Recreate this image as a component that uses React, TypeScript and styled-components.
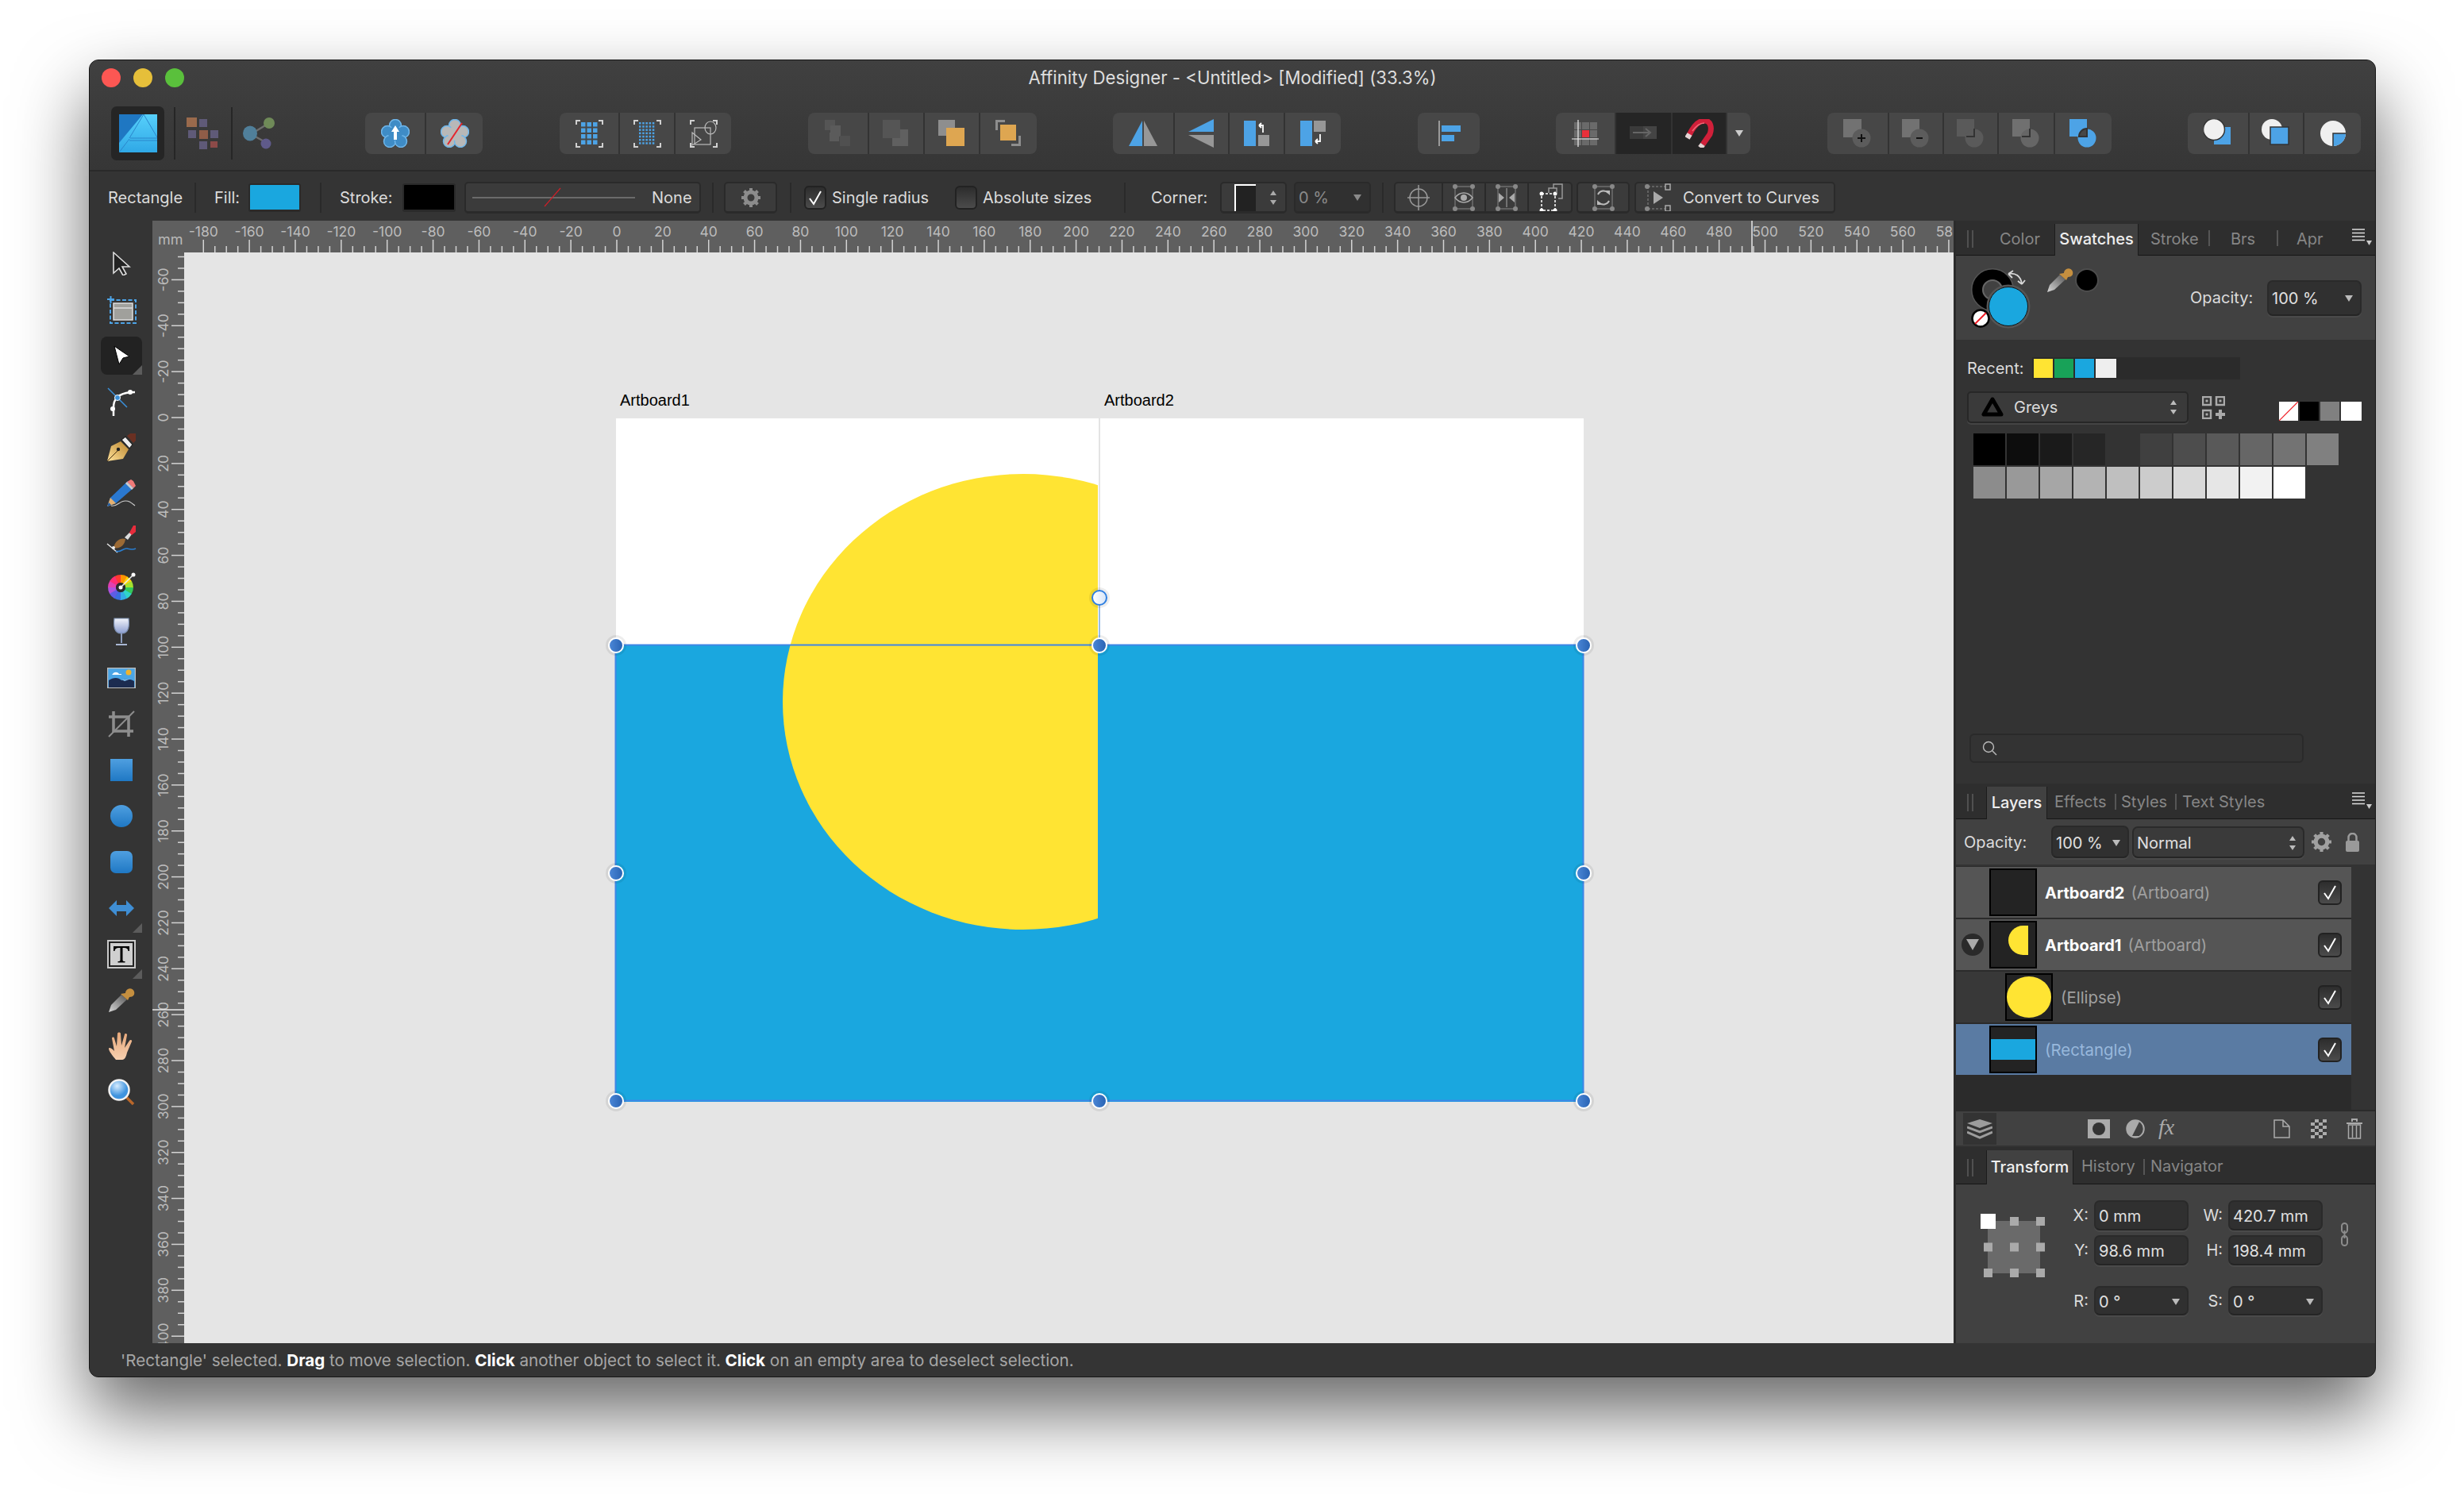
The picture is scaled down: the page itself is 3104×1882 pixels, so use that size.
import React from "react";
import styled, { createGlobalStyle } from "styled-components";

const GlobalStyle = createGlobalStyle`
  html, body {
    margin: 0;
    padding: 0;
    background: #fff;
    font-family: Inter, "Liberation Sans", sans-serif;
  }
  * { box-sizing: border-box; }
`;

const BLUE = "#1aa7df";
const YELLOW = "#ffe433";
const ICON_BLUE = "#4da3e6";

/* ---------- small drawings ---------- */

const Flower = ({ fill }: { fill: string }) => (
  <g fill={fill} stroke="#6fb6ea" strokeWidth="1.5">
    <circle cx="18" cy="8" r="7.5" />
    <circle cx="8" cy="16" r="7.5" />
    <circle cx="28" cy="16" r="7.5" />
    <circle cx="11" cy="28" r="7.5" />
    <circle cx="25" cy="28" r="7.5" />
    <circle cx="18" cy="18" r="9" stroke="none" />
  </g>
);

const DotGrid = ({ cols, rows, size, step, x, y }: { cols: number; rows: number; size: number; step: number; x: number; y: number }) => (
  <g fill={ICON_BLUE}>
    {Array.from({ length: cols * rows }).map((_, i) => (
      <rect key={i} x={x + (i % cols) * step} y={y + Math.floor(i / cols) * step} width={size} height={size} />
    ))}
  </g>
);

const Brackets = () => (
  <g stroke="#d0d0d0" strokeWidth="2" fill="none">
    <path d="M1 6V1H6M29 1h5v5M34 29v5h-5M6 34H1v-5" />
  </g>
);

const CtxHandles = ({ children }: { children?: React.ReactNode }) => (
  <svg width="32" height="36" viewBox="0 0 32 36">
    <rect x="5" y="4" width="22" height="28" fill="none" stroke="#888" strokeWidth="1" />
    <g fill="#888">
      <circle cx="5" cy="4" r="3" />
      <circle cx="27" cy="4" r="3" />
      <circle cx="5" cy="32" r="3" />
      <circle cx="27" cy="32" r="3" />
    </g>
    {children}
  </svg>
);

const Check = () => (
  <svg width="20" height="22" viewBox="0 0 20 22">
    <path d="M3 12l5 7L17 3" fill="none" stroke="#fff" strokeWidth="2" />
  </svg>
);

const Gear = ({ size = 24, color = "#8c8c8c" }: { size?: number; color?: string }) => (
  <svg width={size} height={size} viewBox="0 0 24 24">
    <circle cx="12" cy="12" r="7" fill="none" stroke={color} strokeWidth="5" />
    <g stroke={color} strokeWidth="4">
      <path d="M12 0v5M12 19v5M0 12h5M19 12h5M3.5 3.5l3.5 3.5M17 17l3.5 3.5M20.5 3.5L17 7M7 17l-3.5 3.5" />
    </g>
  </svg>
);

const MenuIcon = () => (
  <svg width="26" height="24" viewBox="0 0 26 24">
    <path d="M1 2h16M1 6.5h16M1 11h16M1 15.500h16" stroke="#ddd" strokeWidth="1.6" />
    <path d="M19 16h7l-3.500 6z" fill="#ccc" />
  </svg>
);

const UpDown = ({ color = "#aaa" }: { color?: string }) => (
  <svg width="10" height="24" viewBox="0 0 10 24">
    <path d="M5 3l4 6H1zM5 21l4-6H1z" fill={color} />
  </svg>
);

const DownTri = ({ color = "#bbb" }: { color?: string }) => (
  <svg width="12" height="10" viewBox="0 0 12 10">
    <path d="M1 1h10L6 9z" fill={color} />
  </svg>
);

const Dropper = ({ w = 34, h = 32 }: { w?: number; h?: number }) => (
  <svg width={w} height={h} viewBox="0 0 34 32">
    <defs>
      <linearGradient id="dropBody" x1="0" y1="1" x2="1" y2="0">
        <stop offset="0" stopColor="#d8d8d8" />
        <stop offset="1" stopColor="#555" />
      </linearGradient>
    </defs>
    <path d="M1 31l3-9L17 9l7 6L10 28z" fill="url(#dropBody)" />
    <path d="M16 8l9 8 2-4c5 0 7-3 6-7-1-3-5-5-8-3-2 1-3 3-3 5z" fill="#c58f3f" />
  </svg>
);

/* left tool column */
const wheelColors = ["#ff3b30", "#ff9500", "#ffd60a", "#a4e22f", "#34c759", "#30d5c8", "#32ade6", "#3a6fe0", "#5e5ce6", "#af52de", "#e040b0", "#ff2d75"];

const toolIcons: React.ReactNode[] = [
  <svg key="cursor" width="24" height="30" viewBox="0 0 24 30">
    <path d="M2 1l20 18h-9l5 9-4 2-5-9-7 6z" fill="#222" stroke="#ddd" strokeWidth="1.6" />
  </svg>,
  <svg key="artboard" width="38" height="36" viewBox="0 0 38 36">
    <rect x="5" y="6" width="32" height="29" fill="none" stroke={ICON_BLUE} strokeWidth="2" strokeDasharray="5 2.500" />
    <path d="M1 5h9M5.500 1v9" stroke={ICON_BLUE} strokeWidth="2" />
    <rect x="9" y="10" width="24" height="21" fill="#a0a09c" stroke="#ddd" strokeWidth="1.500" />
    <path d="M9 16h24" stroke="#ddd" strokeWidth="1.500" />
  </svg>,
  <svg key="move" width="22" height="26" viewBox="0 0 22 26">
    <path d="M2 1l19 13-8 2-5 8z" fill="#fff" stroke="#000" strokeWidth="1" />
  </svg>,
  <svg key="node" width="38" height="38" viewBox="0 0 38 38">
    <path d="M2 2l24 24" stroke="#3a8fd8" strokeWidth="1.500" />
    <path d="M9 37V26C9 14 17 7 36 7" fill="none" stroke="#fff" strokeWidth="2.500" />
    <circle cx="14" cy="14" r="3.500" fill="#3a8fd8" stroke="#fff" />
    <circle cx="30" cy="7" r="3" fill="#fff" />
    <circle cx="8" cy="28" r="3" fill="#fff" />
  </svg>,
  <svg key="pen" width="38" height="36" viewBox="0 0 38 36">
    <defs>
      <linearGradient id="nib" x1="0" y1="1" x2="1" y2="0">
        <stop offset="0" stopColor="#ffe29a" />
        <stop offset="1" stopColor="#b9842d" />
      </linearGradient>
    </defs>
    <path d="M1 35l5-19 12-6 10 10-7 12z" fill="url(#nib)" />
    <path d="M1 35l14-14" stroke="#4a3210" strokeWidth="1" />
    <circle cx="15" cy="20" r="2.200" fill="#222" />
    <path d="M19 8l10 11 4-5L24 4z" fill="#eee" stroke="#222" strokeWidth="1.200" />
    <path d="M26 3l8 9 3-3V0h-7z" fill="#6a3022" />
  </svg>,
  <svg key="pencil" width="38" height="36" viewBox="0 0 38 36">
    <path d="M1 34l4-11L27 2l8 8L12 30z" fill="#2a78d0" />
    <path d="M1 34l4-11 7 7z" fill="#e4b070" />
    <path d="M1 34l2-5 3 3z" fill="#1d5ea8" />
    <path d="M26 3l8 8 3-3-3-6-3-2z" fill="#f07a78" />
    <path d="M24 5l8 8 2-2-8-8z" fill="#ccc" />
    <path d="M6 33c8 2 10-6 18-6 5 0 7 2 12 6" fill="none" stroke="#ccc" strokeWidth="1.200" />
  </svg>,
  <svg key="brush" width="38" height="36" viewBox="0 0 38 36">
    <path d="M9 28c2-9 9-13 15-11-1 8-7 13-15 11z" fill="#9c6a34" />
    <path d="M23 15l4 3 5-7-3-2z" fill="#ddd" />
    <path d="M29 9l3 3 5-4V0h-3z" fill="#e82c3c" />
    <path d="M1 23l13 11" stroke="#eee" strokeWidth="1.300" />
    <circle cx="9" cy="28" r="2" fill="#eee" />
    <path d="M12 32c6 3 9-4 14-3 4 1 7 2 11 0" fill="none" stroke="#2a7ed0" strokeWidth="1.600" />
  </svg>,
  <svg key="wheel" width="36" height="36" viewBox="0 0 36 36">
    {wheelColors.map((c, i) => (
      <circle
        key={c}
        cx="17"
        cy="20"
        r="11"
        fill="none"
        stroke={c}
        strokeWidth="10"
        strokeDasharray="6.200 63"
        transform={`rotate(${i * 30 - 120} 17 20)`}
      />
    ))}
    <circle cx="17" cy="20" r="6" fill="#2a2a2a" />
    <path d="M17 20L33 4" stroke="#eee" strokeWidth="1.600" />
    <circle cx="17" cy="20" r="2.500" fill="#fff" />
    <circle cx="33" cy="4" r="2.500" fill="#fff" />
  </svg>,
  <svg key="vector" width="22" height="36" viewBox="0 0 22 36">
    <defs>
      <linearGradient id="wine" x1="0" y1="0" x2="0" y2="1">
        <stop offset="0" stopColor="#f2f4fa" />
        <stop offset="1" stopColor="#8a9ccf" />
      </linearGradient>
    </defs>
    <path d="M2 1h18c1 8 1 19-9 19S1 9 2 1z" fill="url(#wine)" stroke="#7c8fb0" strokeWidth="1.200" />
    <path d="M11 20v12" stroke="#8c9cbc" strokeWidth="2" />
    <path d="M4 34h14" stroke="#a9b7d2" strokeWidth="2" />
  </svg>,
  <svg key="image" width="36" height="26" viewBox="0 0 36 26">
    <rect x="0.500" y="0.500" width="35" height="25" fill="#4aa5e6" stroke="#bdbdbd" strokeWidth="1.500" />
    <circle cx="27" cy="6" r="3.500" fill="#f2b32c" />
    <path d="M7 8c2-3 6-3 8 0h3v1H6z" fill="#fff" />
    <path d="M2 16c6-4 12-4 16 0 5-2 10-2 16 1v8H2z" fill="#1c2c50" />
    <path d="M18 15l12-1-8 3z" fill="#7dbff0" />
  </svg>,
  <svg key="crop" width="34" height="34" viewBox="0 0 34 34">
    <path d="M7 1v25h25M1 8h25v25" fill="none" stroke="#8e8e8e" strokeWidth="3.500" />
    <path d="M1 33L33 1" stroke="#8e8e8e" strokeWidth="2" />
  </svg>,
  <svg key="rect" width="28" height="28" viewBox="0 0 28 28">
    <defs>
      <linearGradient id="shape" x1="0" y1="0" x2="0" y2="1">
        <stop offset="0" stopColor="#4f9fe0" />
        <stop offset="1" stopColor="#1f78c4" />
      </linearGradient>
    </defs>
    <rect width="28" height="28" fill="url(#shape)" />
  </svg>,
  <svg key="ellipse" width="28" height="28" viewBox="0 0 28 28">
    <circle cx="14" cy="14" r="14" fill="url(#shape)" />
  </svg>,
  <svg key="rrect" width="28" height="28" viewBox="0 0 28 28">
    <rect width="28" height="28" rx="7" fill="url(#shape)" />
  </svg>,
  <svg key="arrows" width="32" height="20" viewBox="0 0 32 20">
    <path d="M0 10L10 0v6h12V0l10 10-10 10v-6H10v6z" fill="#3f8ed4" />
  </svg>,
  <svg key="text" width="36" height="36" viewBox="0 0 36 36">
    <rect x="1" y="1" width="34" height="34" fill="#c9c9c9" stroke="#c9c9c9" strokeWidth="2" />
    <rect x="3" y="3" width="30" height="30" fill="#cfcfcf" stroke="#222" strokeWidth="2" />
    <path d="M8 8h20v6h-1.500c-.5-3-2-4-5-4h-2v15c0 2 1 2 3 2v1.500h-9V27c2 0 3 0 3-2V10h-2c-3 0-4.500 1-5 4H8z" fill="#000" />
  </svg>,
  <Dropper key="dropper" w={34} h={32} />,
  <svg key="hand" width="34" height="36" viewBox="0 0 34 36">
    <defs>
      <linearGradient id="hand" x1="0" y1="0" x2="0" y2="1">
        <stop offset="0" stopColor="#e6a779" />
        <stop offset="1" stopColor="#f7d0b0" />
      </linearGradient>
    </defs>
    <path d="M10 35C6 30 1 24 1 21c0-2 3-1 5 1l2 2L5 8c0-2 3-2 3 0l3 10L12 2c0-2 4-2 4 0l1 15 4-14c0-2 4-1 3 1l-3 16 6-9c1-2 4-1 3 1l-6 14c-1 5-3 9-6 9z" fill="url(#hand)" />
  </svg>,
  <svg key="zoom" width="34" height="34" viewBox="0 0 34 34">
    <defs>
      <radialGradient id="lens" cx="0.400" cy="0.300">
        <stop offset="0" stopColor="#d6ecff" />
        <stop offset="1" stopColor="#3f93de" />
      </radialGradient>
    </defs>
    <path d="M22 22l10 10" stroke="#b9672a" strokeWidth="3.500" />
    <circle cx="14" cy="14" r="12.500" fill="url(#lens)" stroke="#f2f2f2" strokeWidth="2.500" />
  </svg>,
];

/* ---------- window ---------- */

const Page = styled.div`
  width: 3104px;
  height: 1882px;
  padding: 75px 0 0 112px;
  background: #fff;
  overflow: hidden;
`;

const Win = styled.div`
  width: 2881px;
  height: 1660px;
  border: 1px solid #161616;
  border-radius: 12px;
  overflow: hidden;
  display: flex;
  flex-direction: column;
  background: #343434;
  box-shadow: 0 44px 90px rgba(0, 0, 0, 0.6);
`;

const TopChrome = styled.div`
  height: 140px;
  flex: none;
  background: linear-gradient(#404040, #363636);
  border-bottom: 2px solid #2a2a2a;
`;

const TitleRow = styled.div`
  height: 43px;
  position: relative;
  display: flex;
  align-items: center;
  justify-content: center;
  color: #dedede;
  font-size: 22.2px;
`;

const Lights = styled.div`
  position: absolute;
  left: 15px;
  top: 10px;
  display: flex;
  gap: 16px;
`;

const Light = styled.span<{ $c: string }>`
  width: 24px;
  height: 24px;
  border-radius: 50%;
  background: ${(p) => p.$c};
`;

const MainBar = styled.div`
  height: 95px;
  padding-top: 3px;
  display: flex;
  align-items: center;
`;

const PersonaActive = styled.div`
  width: 67px;
  height: 68px;
  margin-left: 27px;
  border-radius: 7px;
  background: #252525;
  display: flex;
  align-items: center;
  justify-content: center;
`;

const PersonaSep = styled.div<{ $ml: number }>`
  width: 2px;
  height: 66px;
  margin-left: ${(p) => p.$ml}px;
  background: #262626;
`;

const PersonaIcon = styled.div<{ $ml: number; $w: number }>`
  width: ${(p) => p.$w}px;
  margin-left: ${(p) => p.$ml}px;
  display: flex;
  justify-content: center;
`;

const Group = styled.div<{ $ml: number }>`
  margin-left: ${(p) => p.$ml}px;
  height: 52px;
  display: flex;
  border-radius: 8px;
  overflow: hidden;
  background: #474747;
`;

const Cell = styled.div<{ $w: number; $dark?: boolean }>`
  width: ${(p) => p.$w}px;
  height: 100%;
  display: flex;
  align-items: center;
  justify-content: center;
  background: ${(p) => (p.$dark ? "#252525" : "transparent")};
  & + & {
    border-left: 2px solid #333;
  }
`;

/* context toolbar */

const ContextBar = styled.div`
  height: 62px;
  flex: none;
  padding: 4px 0 0 23px;
  display: flex;
  align-items: center;
  background: #343434;
  color: #dcdcdc;
  font-size: 20px;
`;

const Label = styled.span<{ $ml?: number; $w: number; $dim?: boolean }>`
  flex: none;
  width: ${(p) => p.$w}px;
  margin-left: ${(p) => p.$ml ?? 0}px;
  white-space: nowrap;
  color: ${(p) => (p.$dim ? "#8a8a8a" : "#dcdcdc")};
`;

const CtxSep = styled.div<{ $ml: number }>`
  flex: none;
  width: 2px;
  height: 38px;
  margin-left: ${(p) => p.$ml}px;
  background: #2a2a2a;
`;

const ColorWell = styled.div<{ $ml: number; $c: string; $w: number }>`
  flex: none;
  width: ${(p) => p.$w}px;
  height: 36px;
  margin-left: ${(p) => p.$ml}px;
  background: ${(p) => p.$c};
  border: 2px solid #2a2a2a;
  border-bottom-width: 3px;
  border-radius: 3px;
`;

const CtxBox = styled.div<{ $ml: number; $w: number; $sunken?: boolean }>`
  flex: none;
  width: ${(p) => p.$w}px;
  height: 40px;
  margin-left: ${(p) => p.$ml}px;
  display: flex;
  align-items: center;
  background: ${(p) => (p.$sunken ? "#303030" : "#3b3b3b")};
  border: 2px solid #2a2a2a;
  border-bottom-width: 3px;
  border-radius: 5px;
  overflow: hidden;
`;

const CheckBox = styled.div<{ $ml?: number; $w?: number; $h?: number }>`
  flex: none;
  width: ${(p) => p.$w ?? 28}px;
  height: ${(p) => p.$h ?? 30}px;
  margin-left: ${(p) => p.$ml ?? 0}px;
  display: flex;
  align-items: center;
  justify-content: center;
  border: 2px solid #222;
  border-radius: 6px;
  background: linear-gradient(#2d2d2d, #4b4b4b);
`;

const IconSlot = styled.div<{ $w: number }>`
  flex: none;
  width: ${(p) => p.$w}px;
  height: 100%;
  display: flex;
  align-items: center;
  justify-content: center;
  & + & {
    border-left: 2px solid #2a2a2a;
  }
`;

/* workspace */

const Workspace = styled.div`
  flex: 1;
  min-height: 0;
  display: flex;
`;

const ToolColumn = styled.div`
  width: 79px;
  flex: none;
  padding-top: 25px;
  background: #343434;
  display: flex;
  flex-direction: column;
  align-items: center;
`;

const ToolCell = styled.div<{ $active?: boolean; $corner?: boolean }>`
  position: relative;
  width: 52px;
  height: 58px;
  flex: none;
  display: flex;
  align-items: center;
  justify-content: center;
  &::before {
    content: "";
    position: absolute;
    left: 0;
    right: 0;
    top: 5px;
    bottom: 5px;
    border-radius: 8px;
    background: ${(p) => (p.$active ? "#222" : "transparent")};
  }
  &::after {
    content: "";
    display: ${(p) => (p.$active || p.$corner ? "block" : "none")};
    position: absolute;
    right: 0;
    bottom: ${(p) => (p.$active ? 5 : -2)}px;
    border-style: solid;
    border-width: 0 0 12px 12px;
    border-color: transparent transparent #5c5c5c transparent;
  }
  & > svg {
    position: relative;
  }
`;

const CanvasColumn = styled.div`
  width: 2269px;
  flex: none;
  display: flex;
  flex-direction: column;
`;

const RulerTop = styled.div`
  height: 40px;
  flex: none;
  background: #5f5f5f;
  display: block;
  & > svg {
    display: block;
  }
`;

const CanvasRow = styled.div`
  flex: 1;
  min-height: 0;
  display: flex;
`;

const RulerSide = styled.div`
  width: 40px;
  flex: none;
  background: #5f5f5f;
  & > svg {
    display: block;
  }
`;

const Canvas = styled.div`
  position: relative;
  flex: 1;
  background: #e5e5e5;
  overflow: hidden;
`;

const BoardName = styled.span<{ $x: number }>`
  position: absolute;
  top: 175px;
  left: ${(p) => p.$x}px;
  font-family: "Liberation Sans", Arial, sans-serif;
  font-size: 20px;
  color: #000;
  white-space: nowrap;
`;

const Art = styled.svg`
  position: absolute;
  left: 540px;
  top: 205px;
`;

const Handle = styled.span<{ $x: number; $y: number; $light?: boolean }>`
  position: absolute;
  left: ${(p) => p.$x - 10}px;
  top: ${(p) => p.$y - 10}px;
  width: 20px;
  height: 20px;
  border-radius: 50%;
  border: ${(p) => (p.$light ? "2px solid #2f7fe0" : "2px solid #fff")};
  background: ${(p) => (p.$light ? "linear-gradient(90deg,#fff,#d8e6f8)" : "linear-gradient(90deg,#4a86d6,#2a64b4)")};
  box-shadow: 0 0 0 3px rgba(0, 0, 0, 0.07);
`;

/* right panels */

const RightPanel = styled.div`
  width: 531px;
  flex: none;
  display: flex;
  flex-direction: column;
  background: #333;
  border-left: 3px solid #2b2b2b;
  font-size: 20px;
  color: #dcdcdc;
`;

const TabBar = styled.div<{ $h: number }>`
  position: relative;
  height: ${(p) => p.$h}px;
  flex: none;
  display: flex;
  align-items: flex-end;
  background: #2e2e2e;
  border-bottom: 1px solid #161616;
  color: #868686;
`;

const Grip = styled.div`
  width: 8px;
  height: 22px;
  margin: 0 0 9px 14px;
  flex: none;
  border-left: 2px solid #505050;
  border-right: 2px solid #505050;
`;

const Tab = styled.div<{ $ml: number; $w: number; $active?: boolean }>`
  flex: none;
  width: ${(p) => p.$w}px;
  height: ${(p) => (p.$active ? "calc(100% - 3px)" : "100%")};
  margin-left: ${(p) => p.$ml}px;
  margin-bottom: ${(p) => (p.$active ? "-1px" : 0)};
  padding: ${(p) => (p.$active ? "0 0 2px" : "2px 0 0")};
  display: flex;
  align-items: center;
  justify-content: ${(p) => (p.$active ? "center" : "flex-start")};
  white-space: nowrap;
  font-weight: ${(p) => (p.$active ? 500 : 400)};
  color: ${(p) => (p.$active ? "#eee" : "#868686")};
  background: ${(p) => (p.$active ? "#414141" : "transparent")};
  border-left: ${(p) => (p.$active ? "1px solid #1c1c1c" : "none")};
  border-right: ${(p) => (p.$active ? "1px solid #1c1c1c" : "none")};
`;

const TabSep = styled.div<{ $ml: number }>`
  flex: none;
  width: 2px;
  height: 20px;
  margin: 0 0 11px ${(p) => p.$ml}px;
  background: #565656;
`;

const MenuSlot = styled.div`
  position: absolute;
  right: 4px;
  bottom: 10px;
  display: flex;
`;

const ColorSection = styled.div`
  height: 106px;
  flex: none;
  padding: 0 16px 0 16px;
  display: flex;
  align-items: center;
  background: #414141;
`;

const EyeDrop = styled.div`
  margin: -44px 0 0 18px;
  display: flex;
  align-items: center;
  gap: 2px;
`;

const BlackDot = styled.span`
  width: 30px;
  height: 30px;
  border-radius: 50%;
  background: #000;
  border: 2px solid #4d4d4d;
`;

const FieldBox = styled.div<{ $w: number; $h: number; $ml?: number; $flat?: boolean }>`
  flex: none;
  width: ${(p) => p.$w}px;
  height: ${(p) => p.$h}px;
  margin-left: ${(p) => p.$ml ?? 0}px;
  padding: 2px 8px 0 4px;
  display: flex;
  align-items: center;
  justify-content: space-between;
  white-space: nowrap;
  color: #e0e0e0;
  background: ${(p) => (p.$flat ? "#3a3a3a" : "#303030")};
  border: 2px solid #2a2a2a;
  border-bottom-color: #252525;
  border-radius: 7px;
  box-shadow: 0 2px 0 #4a4a4a;
`;

const SwatchBody = styled.div`
  flex: 1;
  min-height: 0;
  display: flex;
  flex-direction: column;
`;

const RecentRow = styled.div`
  margin: 22px 0 0 14px;
  height: 28px;
  display: flex;
  align-items: center;
`;

const RecentStrip = styled.div`
  width: 262px;
  height: 28px;
  margin-left: 10px;
  padding: 2px;
  display: flex;
  gap: 2px;
  background: #2b2b2b;
`;

const Chip = styled.span<{ $c: string; $w: number }>`
  width: ${(p) => p.$w}px;
  height: 24px;
  flex: none;
  background: ${(p) => p.$c};
`;

const PaletteRow = styled.div`
  margin: 15px 0 0 14px;
  display: flex;
  align-items: center;
`;

const PaletteSelect = styled.div`
  width: 279px;
  height: 40px;
  padding: 0 12px 0 16px;
  display: flex;
  align-items: center;
  gap: 13px;
  background: #3a3a3a;
  border: 2px solid #272727;
  border-radius: 5px;
  box-shadow: 0 2px 0 #444;
`;

const Spacer = styled.span`
  flex: 1;
`;

const QuickChips = styled.div`
  margin: 10px 0 0 68px;
  display: flex;
  gap: 2px;
`;

const SwatchGrid = styled.div`
  margin: 13px 0 0 22px;
  width: 460px;
  display: grid;
  grid-template-columns: repeat(11, 40px);
  grid-auto-rows: 40px;
  gap: 2px;
`;

const GreySwatch = styled.span<{ $c: string }>`
  background: ${(p) => p.$c};
`;

const SearchBox = styled.div`
  width: 421px;
  height: 37px;
  margin: auto 0 26px 17px;
  padding-left: 14px;
  display: flex;
  align-items: center;
  background: #333;
  border: 2px solid #2a2a2a;
  border-radius: 6px;
`;

const OpacityRow = styled.div`
  height: 59px;
  flex: none;
  padding-left: 10px;
  display: flex;
  align-items: center;
  background: #414141;
  border-bottom: 2px solid #333;
`;

const RowIcon = styled.div<{ $ml: number }>`
  margin-left: ${(p) => p.$ml}px;
  display: flex;
`;

const LayerList = styled.div`
  height: 307px;
  flex: none;
  padding-top: 1px;
  display: flex;
  flex-direction: column;
  gap: 2px;
  background: linear-gradient(90deg, #2b2b2b 498px, #333 498px);
`;

const LayerRow = styled.div<{ $bg: string }>`
  width: 498px;
  height: 64px;
  flex: none;
  display: flex;
  align-items: center;
  background: ${(p) => p.$bg};
`;

const Expander = styled.div`
  width: 42px;
  flex: none;
  display: flex;
  justify-content: center;
`;

const ExpanderDot = styled.span`
  width: 28px;
  height: 28px;
  border-radius: 50%;
  background: #2a2a2a;
  display: flex;
  align-items: center;
  justify-content: center;
`;

const Thumb = styled.div<{ $indent?: number }>`
  position: relative;
  flex: none;
  width: 60px;
  height: 60px;
  margin-left: ${(p) => p.$indent ?? 0}px;
  background: #232323;
  border: 2px solid #000;
  overflow: hidden;
`;

const ThumbBand = styled.span`
  position: absolute;
  left: 0;
  right: 0;
  top: 15px;
  height: 26px;
  background: ${BLUE};
`;

const ThumbHalf = styled.span`
  position: absolute;
  left: 22px;
  top: 4px;
  width: 25px;
  height: 37px;
  border-radius: 19px 0 0 19px / 19px 0 0 19px;
  background: ${YELLOW};
`;

const ThumbCircle = styled.span`
  position: absolute;
  left: 0;
  top: 2px;
  width: 56px;
  height: 52px;
  border-radius: 50%;
  background: ${YELLOW};
`;

const LayerName = styled.span<{ $tone?: string }>`
  margin-left: 10px;
  white-space: nowrap;
  font-size: 20.4px;
  color: ${(p) => p.$tone ?? "#a0a0a0"};
`;

const LayerStrong = styled.b`
  color: #fff;
  font-weight: 700;
  font-size: 20px;
  margin-right: 8px;
`;

const LayerCheck = styled(CheckBox)`
  margin-left: auto;
  margin-right: 12px;
`;

const BottomBar = styled.div`
  height: 47px;
  flex: none;
  padding: 2px 0 2px 9px;
  display: flex;
  align-items: center;
  background: #414141;
  border-top: 2px solid #2b2b2b;
  border-bottom: 2px solid #333;
`;

const LayersToggle = styled.div`
  width: 42px;
  height: 40px;
  display: flex;
  align-items: center;
  justify-content: center;
  background: #333;
`;

const TransformBody = styled.div`
  height: 200px;
  flex: none;
  padding: 20px 0 0 31px;
  display: flex;
  background: #414141;
`;

const AnchorWrap = styled.div`
  margin-top: 17px;
  width: 96px;
  flex: none;
`;

const FieldCol = styled.div`
  display: flex;
  flex-direction: column;
`;

const FieldRow = styled.div<{ $mt?: number }>`
  margin-top: ${(p) => p.$mt ?? 0}px;
  display: flex;
  align-items: center;
`;

const FieldLabel = styled.span<{ $w: number }>`
  flex: none;
  width: ${(p) => p.$w}px;
  margin-right: 7px;
  text-align: right;
  color: #dcdcdc;
`;

const ChainSlot = styled.div`
  margin: 28px 0 0 23px;
`;

const StatusBar = styled.div`
  height: 42px;
  flex: none;
  padding: 0 0 0 39px;
  display: flex;
  align-items: center;
  background: #343434;
  color: #a6a6a6;
  font-size: 20.6px;
  white-space: pre;
`;

const StatusKey = styled.b`
  color: #fff;
  font-weight: 700;
`;

/* ---------- rulers ---------- */

const PX = 2.893;

const TopRuler = () => {
  const x0 = 585;
  const ticks: number[] = [];
  for (let u = -180; u <= 580; u += 5) ticks.push(u);
  return (
    <svg width="2269" height="40" viewBox="0 0 2269 40">
      <text x="7" y="30" fontSize="18" fill="#b8b8b8" fontFamily="Inter, sans-serif">mm</text>
      {ticks.map((u) => {
        const x = x0 + u * PX;
        const major = u % 20 === 0;
        if (x < 40) return null;
        return (
          <g key={u}>
            <path d={`M${x} ${major ? 24 : 32}V40`} stroke="#d4d4d4" strokeWidth="1.500" />
            {major && (
              <text x={x} y="20" textAnchor="middle" fontSize="17.500" fill="#bcbcbc" fontFamily="Inter, sans-serif">
                {u}
              </text>
            )}
          </g>
        );
      })}
      <path d="M2015 0V40" stroke="#e8e8e8" strokeWidth="1.500" />
    </svg>
  );
};

const SideRuler = () => {
  const y0 = 208;
  const ticks: number[] = [];
  for (let u = -70; u <= 400; u += 5) ticks.push(u);
  return (
    <svg width="40" height="1374" viewBox="0 0 40 1374">
      {ticks.map((u) => {
        const y = y0 + u * PX;
        const major = u % 20 === 0;
        return (
          <g key={u}>
            <path d={`M${major ? 24 : 32} ${y}H40`} stroke="#d4d4d4" strokeWidth="1.500" />
            {major && (
              <text
                x="20"
                y={y}
                transform={`rotate(-90 20 ${y})`}
                textAnchor="middle"
                fontSize="17.500"
                fill="#bcbcbc"
                fontFamily="Inter, sans-serif"
              >
                {u}
              </text>
            )}
          </g>
        );
      })}
      <path d={`M0 954H40`} stroke="#e8e8e8" strokeWidth="1.500" />
    </svg>
  );
};

/* ---------- data ---------- */

const greys = ["#000", "#0d0d0d", "#1a1a1a", "#262626", "#333", "#404040", "#4d4d4d", "#595959", "#666", "#737373", "#808080", "#8c8c8c", "#999", "#a6a6a6", "#b3b3b3", "#bfbfbf", "#ccc", "#d9d9d9", "#e6e6e6", "#f2f2f2", "#fff"];

const handles = [
  [544, 495],
  [1153, 495],
  [1763, 495],
  [544, 782],
  [1763, 782],
  [544, 1069],
  [1153, 1069],
  [1763, 1069],
];

const App: React.FC = () => {
  return (
    <Page>
      <GlobalStyle />
      <Win>
        <TopChrome>
          <TitleRow>
            <Lights>
              <Light $c="#fc5753" />
              <Light $c="#e6bf3a" />
              <Light $c="#5ac03c" />
            </Lights>
            Affinity Designer - &lt;Untitled&gt; [Modified] (33.3%)
          </TitleRow>
          <MainBar>
            <PersonaActive>
              <svg width="48" height="48" viewBox="0 0 48 48">
                <defs>
                  <linearGradient id="adBg" x1="0" y1="0" x2="0" y2="1">
                    <stop offset="0" stopColor="#57d0fb" />
                    <stop offset="1" stopColor="#2fa8e6" />
                  </linearGradient>
                </defs>
                <rect width="48" height="48" fill="url(#adBg)" />
                <path d="M0 0h30L0 36z" fill="#1f77c2" />
                <path d="M31 0L13 30M14 30h34M13 33h35M31 0l17 29M0 48l13-17" stroke="#2b86cc" strokeWidth="1" fill="none" />
              </svg>
            </PersonaActive>
            <PersonaSep $ml={12} />
            <PersonaIcon $ml={14} $w={42}>
              <svg width="42" height="40" viewBox="0 0 42 40">
                <rect x="0" y="0" width="13" height="12" fill="#9a6a4c" />
                <rect x="16" y="2" width="10" height="10" fill="#5f5a78" />
                <rect x="2" y="16" width="10" height="10" fill="#5f5a78" />
                <rect x="16" y="16" width="11" height="11" fill="#8f5d48" />
                <rect x="30" y="16" width="10" height="10" fill="#5f5a78" />
                <rect x="16" y="30" width="10" height="10" fill="#5f5a78" />
                <rect x="30" y="30" width="9" height="8" fill="#8c4a48" />
              </svg>
            </PersonaIcon>
            <PersonaSep $ml={14} />
            <PersonaIcon $ml={13} $w={40}>
              <svg width="40" height="40" viewBox="0 0 40 40">
                <path d="M10 21L33 7M10 21l22 12" stroke="#6d6d6d" strokeWidth="2.500" />
                <ellipse cx="9" cy="20" rx="9" ry="9.500" fill="#507f9a" />
                <ellipse cx="33" cy="7" rx="7" ry="7" fill="#6f8a58" />
                <ellipse cx="29" cy="33" rx="6.500" ry="6.500" fill="#5f5a8a" />
              </svg>
            </PersonaIcon>

            <Group $ml={114}>
              <Cell $w={75}>
                <svg width="36" height="36" viewBox="0 0 36 36">
                  <Flower fill="#3f8cc6" />
                  <path d="M18 8l5 8h-3v10h-4V16h-3z" fill="#fff" />
                </svg>
              </Cell>
              <Cell $w={73}>
                <svg width="36" height="36" viewBox="0 0 36 36">
                  <Flower fill="#b8b8b8" />
                  <path d="M9 32L27 5" stroke="#e5242c" strokeWidth="2" />
                </svg>
              </Cell>
            </Group>

            <Group $ml={97}>
              <Cell $w={74}>
                <svg width="35" height="35" viewBox="0 0 35 35">
                  <Brackets />
                  <DotGrid cols={3} rows={4} size={5.500} step={7.500} x={7} y={3} />
                </svg>
              </Cell>
              <Cell $w={70}>
                <svg width="35" height="35" viewBox="0 0 35 35">
                  <Brackets />
                  <DotGrid cols={5} rows={7} size={2.500} step={4.200} x={7} y={3} />
                </svg>
              </Cell>
              <Cell $w={72}>
                <svg width="35" height="35" viewBox="0 0 35 35">
                  <Brackets />
                  <g fill="none" stroke="#bbb" strokeWidth="1.200">
                    <rect x="6" y="10" width="20" height="21" />
                    <ellipse cx="26" cy="10" rx="7" ry="8" />
                    <path d="M3 16l11 9-11 7z" />
                  </g>
                </svg>
              </Cell>
            </Group>

            <Group $ml={97}>
              <Cell $w={75}>
                <svg width="34" height="34" viewBox="0 0 34 34">
                  <rect x="0" y="0" width="13" height="13" fill="#555" />
                  <rect x="7" y="7" width="13" height="14" fill="#5b5b5b" />
                  <rect x="19" y="20" width="13" height="13" fill="#505050" />
                  <rect x="6" y="16" width="12" height="11" fill="#5b5b5b" />
                </svg>
              </Cell>
              <Cell $w={70}>
                <svg width="34" height="34" viewBox="0 0 34 34">
                  <rect x="0" y="0" width="22" height="23" fill="#555" />
                  <rect x="12" y="23" width="20" height="10" fill="#606060" />
                  <rect x="22" y="12" width="10" height="12" fill="#606060" />
                </svg>
              </Cell>
              <Cell $w={70}>
                <svg width="34" height="34" viewBox="0 0 34 34">
                  <path d="M0 0h21v10H10v10H0z" fill="#8e8e8e" />
                  <rect x="10" y="10" width="23" height="23" fill="#dea651" />
                </svg>
              </Cell>
              <Cell $w={73}>
                <svg width="34" height="34" viewBox="0 0 34 34">
                  <path d="M0 0h12v3H3v10H0zM29 20h3v13H20v-3h9z" fill="#8e8e8e" />
                  <rect x="6" y="6" width="20" height="20" fill="#dea651" />
                </svg>
              </Cell>
            </Group>

            <Group $ml={96}>
              <Cell $w={76}>
                <svg width="36" height="34" viewBox="0 0 36 34">
                  <path d="M17 1v32H0z" fill={ICON_BLUE} />
                  <path d="M19 1v32h17z" fill="#979797" />
                </svg>
              </Cell>
              <Cell $w={69}>
                <svg width="33" height="36" viewBox="0 0 33 36">
                  <path d="M32 0v16H0z" fill={ICON_BLUE} />
                  <path d="M32 36V20H0z" fill="#979797" />
                </svg>
              </Cell>
              <Cell $w={70}>
                <svg width="32" height="34" viewBox="0 0 32 34">
                  <rect x="0" y="1" width="15" height="32" fill={ICON_BLUE} />
                  <rect x="18" y="19" width="14" height="14" fill="#979797" />
                  <path d="M24 16V7h-5M19 7l3-3M19 7l3 3" fill="none" stroke="#fff" strokeWidth="1.800" />
                </svg>
              </Cell>
              <Cell $w={72}>
                <svg width="32" height="34" viewBox="0 0 32 34">
                  <rect x="0" y="1" width="15" height="32" fill={ICON_BLUE} />
                  <rect x="17" y="1" width="15" height="14" fill="#979797" />
                  <path d="M25 18v9h-6M19 27l3-3M19 27l3 3" fill="none" stroke="#fff" strokeWidth="1.800" />
                </svg>
              </Cell>
            </Group>

            <Group $ml={97}>
              <Cell $w={78}>
                <svg width="30" height="34" viewBox="0 0 30 34">
                  <rect x="2" y="1" width="2" height="32" fill="#9a9a9a" />
                  <rect x="6" y="7" width="24" height="8" fill={ICON_BLUE} />
                  <rect x="6" y="19" width="16" height="8" fill={ICON_BLUE} />
                </svg>
              </Cell>
            </Group>

            <Group $ml={96}>
              <Cell $w={74}>
                <svg width="34" height="34" viewBox="0 0 34 34">
                  <g fill="#6a6a6a">
                    {[0, 1, 2, 3, 5, 6, 7, 8].map((i) => (
                      <rect key={i} x={3 + (i % 3) * 10} y={3 + Math.floor(i / 3) * 10} width="9" height="9" />
                    ))}
                  </g>
                  <rect x="13" y="13" width="9" height="9" fill="#e8303a" />
                  <path d="M0 24h34M8 0v34" stroke="#eee" strokeWidth="1.200" />
                </svg>
              </Cell>
              <Cell $w={71} $dark>
                <svg width="36" height="18" viewBox="0 0 36 18">
                  <rect width="34" height="16" fill="#3a3a3a" />
                  <rect x="17" y="0" width="17" height="16" fill="#444" />
                  <path d="M4 8h20M20 3l6 5-6 5" fill="none" stroke="#666" strokeWidth="2" />
                </svg>
              </Cell>
              <Cell $w={69} $dark>
                <svg width="36" height="36" viewBox="0 0 36 36">
                  <path d="M5 20C10 10 16 2 24 2c8 0 10 9 7 17l-9 13" fill="none" stroke="#d0203a" strokeWidth="7" />
                  <path d="M9 15C14 8 18 5 24 5" fill="none" stroke="#f06a78" strokeWidth="1.500" />
                  <path d="M5.500 19l-3 5M22 32l-3 4" stroke="#e4d4d4" strokeWidth="7" />
                </svg>
              </Cell>
              <Cell $w={31}>
                <DownTri color="#ccc" />
              </Cell>
            </Group>

            <Group $ml={97}>
              <Cell $w={76}>
                <svg width="36" height="36" viewBox="0 0 36 36">
                  <rect x="0" y="0" width="23" height="23" fill="#727272" />
                  <circle cx="23" cy="24" r="11.500" fill="#5c5c5c" />
                  <path d="M23 19v10M18 24h10" stroke="#111" strokeWidth="2" />
                </svg>
              </Cell>
              <Cell $w={69}>
                <svg width="36" height="36" viewBox="0 0 36 36">
                  <rect x="0" y="0" width="22" height="23" fill="#727272" />
                  <circle cx="22" cy="24" r="11.500" fill="#5c5c5c" />
                  <path d="M18 24h8" stroke="#111" strokeWidth="2" />
                </svg>
              </Cell>
              <Cell $w={69}>
                <svg width="36" height="36" viewBox="0 0 36 36">
                  <rect x="0" y="0" width="22" height="22" fill="#5a5a5a" />
                  <circle cx="22" cy="24" r="11.500" fill="#5a5a5a" />
                  <path d="M12 22h10V12" fill="none" stroke="#333" strokeWidth="2" />
                </svg>
              </Cell>
              <Cell $w={71}>
                <svg width="36" height="36" viewBox="0 0 36 36">
                  <rect x="0" y="0" width="22" height="22" fill="#707070" />
                  <circle cx="22" cy="24" r="11.500" fill="#666" />
                  <path d="M12 22h10V12" fill="none" stroke="#333" strokeWidth="2" />
                </svg>
              </Cell>
              <Cell $w={73}>
                <svg width="36" height="36" viewBox="0 0 36 36">
                  <rect x="0" y="0" width="22" height="22" fill={ICON_BLUE} />
                  <circle cx="22" cy="24" r="11.500" fill={ICON_BLUE} />
                  <path d="M12 22h10V12a10 10 0 0 0-10 10z" fill="#474747" stroke="#333" strokeWidth="2" />
                </svg>
              </Cell>
            </Group>

            <Group $ml={96}>
              <Cell $w={75.500}>
                <svg width="36" height="36" viewBox="0 0 36 36">
                  <rect x="13" y="10" width="21" height="22" fill={ICON_BLUE} />
                  <circle cx="13" cy="13" r="13.500" fill="#f0f0f0" stroke="#333" strokeWidth="1.500" />
                </svg>
              </Cell>
              <Cell $w={69.500}>
                <svg width="36" height="36" viewBox="0 0 36 36">
                  <circle cx="13" cy="13" r="13" fill="#f0f0f0" />
                  <rect x="11" y="10" width="23" height="22" fill={ICON_BLUE} stroke="#333" strokeWidth="1.500" />
                </svg>
              </Cell>
              <Cell $w={73}>
                <svg width="32" height="32" viewBox="0 0 32 32">
                  <circle cx="16" cy="16" r="16" fill="#f0f0f0" />
                  <path d="M16 16h16a16 16 0 0 1-16 16z" fill={ICON_BLUE} />
                  <path d="M16 32V16h16" fill="none" stroke="#333" strokeWidth="1.500" />
                </svg>
              </Cell>
            </Group>
          </MainBar>
        </TopChrome>

        <ContextBar>
          <Label $w={95}>Rectangle</Label>
          <CtxSep $ml={14} />
          <Label $ml={23} $w={32}>Fill:</Label>
          <ColorWell $ml={11} $w={66} $c={BLUE} />
          <CtxSep $ml={24} />
          <Label $ml={23} $w={67}>Stroke:</Label>
          <ColorWell $ml={12} $w={67} $c="#000" />
          <CtxBox $ml={11} $w={298}>
            <svg width="224" height="30" viewBox="0 0 224 30">
              <path d="M8 15h205" stroke="#9a9a9a" strokeWidth="1.200" />
              <path d="M99 26l20-23" stroke="#d01f28" strokeWidth="1.200" />
            </svg>
            <Label $ml={10} $w={50}>None</Label>
          </CtxBox>
          <CtxSep $ml={14} />
          <CtxBox $ml={13} $w={67}>
            <IconSlot $w={63}>
              <Gear />
            </IconSlot>
          </CtxBox>
          <CtxSep $ml={16} />
          <CheckBox $ml={16}>
            <Check />
          </CheckBox>
          <Label $ml={7} $w={124}>Single radius</Label>
          <CheckBox $ml={31} />
          <Label $ml={7} $w={140}>Absolute sizes</Label>
          <CtxSep $ml={38} />
          <Label $ml={32} $w={71}>Corner:</Label>
          <CtxBox $ml={16} $w={84}>
            <IconSlot $w={60}>
              <svg width="28" height="34" viewBox="0 0 28 34">
                <path d="M1 34V1h26" fill="none" stroke="#fff" strokeWidth="2" />
                <rect x="2" y="2" width="25" height="32" fill="#222" />
              </svg>
            </IconSlot>
            <UpDown />
          </CtxBox>
          <CtxBox $ml={9} $w={97} $sunken>
            <Label $ml={4} $w={68} $dim>0 %</Label>
            <DownTri color="#8a8a8a" />
          </CtxBox>
          <CtxSep $ml={14} />
          <CtxBox $ml={13} $w={225}>
            <IconSlot $w={58}>
              <svg width="30" height="34" viewBox="0 0 30 34">
                <circle cx="15" cy="17" r="11" fill="none" stroke="#999" strokeWidth="1.500" />
                <path d="M15 1v32M1 17h28" stroke="#999" strokeWidth="1.500" />
              </svg>
            </IconSlot>
            <IconSlot $w={54}>
              <CtxHandles>
                <path d="M5 18c6-8 16-8 22 0-6 8-16 8-22 0z" fill="none" stroke="#aaa" strokeWidth="1.500" />
                <circle cx="16" cy="18" r="4" fill="#aaa" />
              </CtxHandles>
            </IconSlot>
            <IconSlot $w={54}>
              <CtxHandles>
                <path d="M6 12l7 6-7 6zM26 12l-7 6 7 6z" fill="#aaa" />
                <path d="M16 6v24" stroke="#aaa" strokeWidth="1" />
              </CtxHandles>
            </IconSlot>
            <IconSlot $w={55}>
              <svg width="32" height="36" viewBox="0 0 32 36">
                <rect x="5" y="13" width="17" height="21" fill="none" stroke="#fff" strokeWidth="1.500" strokeDasharray="3 2" />
                <g fill="#fff">
                  <circle cx="5" cy="13" r="2.500" />
                  <circle cx="22" cy="13" r="2.500" />
                  <circle cx="5" cy="34" r="2.500" />
                  <circle cx="22" cy="34" r="2.500" />
                </g>
                <path d="M14 12V6h10v6M20 6V1h11v18h-5" fill="none" stroke="#999" strokeWidth="1.500" />
              </svg>
            </IconSlot>
          </CtxBox>
          <CtxBox $ml={5} $w={67}>
            <IconSlot $w={63}>
              <CtxHandles>
                <path d="M9 14a8 8 0 0 1 13-2M23 22a8 8 0 0 1-13 2" fill="none" stroke="#bbb" strokeWidth="2" />
                <path d="M18 9h6v6zM14 27H8v-6z" fill="#bbb" />
              </CtxHandles>
            </IconSlot>
          </CtxBox>
          <CtxBox $ml={6} $w={253}>
            <IconSlot $w={54}>
              <svg width="36" height="36" viewBox="0 0 36 36">
                <path d="M6 4v28M6 4h22M6 32h22" fill="none" stroke="#888" strokeDasharray="3 2" />
                <circle cx="5" cy="4" r="3" fill="#888" />
                <circle cx="5" cy="32" r="3" fill="#888" />
                <rect x="28" y="1" width="6" height="7" fill="none" stroke="#aaa" strokeWidth="1.500" />
                <rect x="28" y="28" width="6" height="7" fill="none" stroke="#aaa" strokeWidth="1.500" />
                <path d="M13 10l12 8-12 8z" fill="#aaa" />
              </svg>
            </IconSlot>
            <Label $ml={5} $w={180}>Convert to Curves</Label>
          </CtxBox>
        </ContextBar>

        <Workspace>
          <ToolColumn>
            {toolIcons.map((icon, i) => (
              <ToolCell key={i} $active={i === 2} $corner={i === 14 || i === 15}>
                {icon}
              </ToolCell>
            ))}
          </ToolColumn>

          <CanvasColumn>
            <RulerTop>
              <TopRuler />
            </RulerTop>
            <CanvasRow>
              <RulerSide>
                <SideRuler />
              </RulerSide>
              <Canvas>
                <BoardName $x={549}>Artboard1</BoardName>
                <BoardName $x={1159}>Artboard2</BoardName>
                <Art width="1240" height="880" viewBox="0 0 1240 880">
                  <rect x="4" y="4" width="1219" height="287" fill="#fff" />
                  <rect x="612" y="4" width="2" height="287" fill="#e4e4e4" />
                  <rect x="3" y="290" width="1220" height="575" fill={BLUE} />
                  <clipPath id="half">
                    <rect x="0" y="0" width="611" height="880" />
                  </clipPath>
                  <ellipse cx="517" cy="361" rx="303" ry="287" fill={YELLOW} clipPath="url(#half)" />
                  <rect x="3.500" y="289.500" width="1219" height="574" fill="none" stroke="#3f86e6" strokeWidth="2" />
                  <path d="M613 230V290" stroke="#7fb0ea" strokeWidth="1.500" />
                </Art>
                {handles.map(([x, y]) => (
                  <Handle key={`${x}-${y}`} $x={x} $y={y} />
                ))}
                <Handle $x={1153} $y={435} $light />
              </Canvas>
            </CanvasRow>
          </CanvasColumn>

          <RightPanel>
            <TabBar $h={44}>
              <Grip />
              <Tab $ml={33} $w={50}>Color</Tab>
              <Tab $ml={19} $w={106} $active>Swatches</Tab>
              <Tab $ml={15} $w={61}>Stroke</Tab>
              <TabSep $ml={12} />
              <Tab $ml={26} $w={32}>Brs</Tab>
              <TabSep $ml={26} />
              <Tab $ml={23} $w={33}>Apr</Tab>
              <MenuSlot>
                <MenuIcon />
              </MenuSlot>
            </TabBar>

            <ColorSection>
              <svg width="80" height="80" viewBox="0 0 80 80">
                <circle cx="30" cy="30" r="26" fill="none" stroke="#555" strokeWidth="2" />
                <circle cx="30" cy="30" r="19" fill="none" stroke="#000" strokeWidth="13" />
                <circle cx="30" cy="30" r="12" fill="none" stroke="#666" strokeWidth="2" />
                <circle cx="50" cy="51" r="26" fill={BLUE} stroke="#555" strokeWidth="3" />
                <circle cx="50" cy="51" r="24.500" fill="none" stroke="#111" strokeWidth="1" />
                <circle cx="15" cy="66" r="10.500" fill="#fff" stroke="#000" strokeWidth="2.500" />
                <path d="M8 73l14-14" stroke="#f01c24" strokeWidth="2" />
                <path d="M50 10c9-2 16 3 17 13M50 10l6-4M50 10l5 5M67 23l-5-4M67 23l4-5" fill="none" stroke="#d8d8d8" strokeWidth="1.800" />
              </svg>
              <EyeDrop>
                <Dropper />
                <BlackDot />
              </EyeDrop>
              <Label $ml={115} $w={80}>Opacity:</Label>
              <FieldBox $w={119} $h={45} $ml={17}>
                100 %
                <DownTri />
              </FieldBox>
            </ColorSection>

            <SwatchBody>
              <RecentRow>
                <Label $w={72}>Recent:</Label>
                <RecentStrip>
                  <Chip $c={YELLOW} $w={24} />
                  <Chip $c="#18a258" $w={24} />
                  <Chip $c={BLUE} $w={24} />
                  <Chip $c="#eee" $w={26} />
                </RecentStrip>
              </RecentRow>
              <PaletteRow>
                <PaletteSelect>
                  <svg width="28" height="26" viewBox="0 0 28 26">
                    <path d="M14 3L3 22h22z" fill="none" stroke="#000" strokeWidth="5" strokeLinejoin="round" />
                  </svg>
                  Greys
                  <Spacer />
                  <UpDown color="#bbb" />
                </PaletteSelect>
                <RowIcon $ml={17}>
                  <svg width="29" height="29" viewBox="0 0 29 29">
                    <g fill="none" stroke="#aaa" strokeWidth="2.500">
                      <rect x="1" y="1" width="10" height="10" />
                      <rect x="18" y="1" width="10" height="10" />
                      <rect x="1" y="18" width="10" height="10" />
                    </g>
                    <g fill="#aaa">
                      <rect x="4.500" y="4.500" width="3" height="3" />
                      <rect x="21.500" y="4.500" width="3" height="3" />
                      <rect x="4.500" y="21.500" width="3" height="3" />
                    </g>
                    <path d="M23 17v12M17 23h12" stroke="#aaa" strokeWidth="4" />
                  </svg>
                </RowIcon>
                <QuickChips>
                  <svg width="24" height="24" viewBox="0 0 24 24">
                    <rect width="24" height="24" fill="#fff" />
                    <path d="M0 24L24 0" stroke="#f01c24" strokeWidth="1.200" />
                  </svg>
                  <Chip $c="#000" $w={24} />
                  <Chip $c="#808080" $w={24} />
                  <Chip $c="#fff" $w={26} />
                </QuickChips>
              </PaletteRow>
              <SwatchGrid>
                {greys.map((g, i) => (
                  <GreySwatch key={i} $c={g} />
                ))}
              </SwatchGrid>
              <SearchBox>
                <svg width="19" height="19" viewBox="0 0 19 19">
                  <circle cx="8" cy="8" r="6.500" fill="none" stroke="#bbb" strokeWidth="1.400" />
                  <path d="M13 13l5 5" stroke="#bbb" strokeWidth="1.400" />
                </svg>
              </SearchBox>
            </SwatchBody>

            <TabBar $h={45}>
              <Grip />
              <Tab $ml={16} $w={77} $active>Layers</Tab>
              <Tab $ml={9} $w={67}>Effects</Tab>
              <TabSep $ml={9} />
              <Tab $ml={6} $w={59}>Styles</Tab>
              <TabSep $ml={9} />
              <Tab $ml={7} $w={104}>Text Styles</Tab>
              <MenuSlot>
                <MenuIcon />
              </MenuSlot>
            </TabBar>

            <OpacityRow>
              <Label $w={80}>Opacity:</Label>
              <FieldBox $w={98} $h={41} $ml={30}>
                100 %
                <DownTri />
              </FieldBox>
              <FieldBox $w={217} $h={40} $ml={4} $flat>
                <span>Normal</span>
                <UpDown color="#bbb" />
              </FieldBox>
              <RowIcon $ml={9}>
                <Gear size={25} color="#a0a0a0" />
              </RowIcon>
              <RowIcon $ml={18}>
                <svg width="17" height="24" viewBox="0 0 17 24">
                  <path d="M3.500 10V6a5 5 0 0 1 10 0v4" fill="none" stroke="#9a9a9a" strokeWidth="2.500" />
                  <rect y="10" width="17" height="14" rx="2" fill="#9a9a9a" />
                </svg>
              </RowIcon>
            </OpacityRow>

            <LayerList>
              <LayerRow $bg="#555">
                <Expander />
                <Thumb />
                <LayerName>
                  <LayerStrong>Artboard2</LayerStrong>(Artboard)
                </LayerName>
                <LayerCheck $w={30} $h={31}>
                  <Check />
                </LayerCheck>
              </LayerRow>
              <LayerRow $bg="#555">
                <Expander>
                  <ExpanderDot>
                    <svg width="16" height="14" viewBox="0 0 16 14">
                      <path d="M0 0h16L8 14z" fill="#aaa" />
                    </svg>
                  </ExpanderDot>
                </Expander>
                <Thumb>
                  <ThumbHalf />
                </Thumb>
                <LayerName>
                  <LayerStrong>Artboard1</LayerStrong>(Artboard)
                </LayerName>
                <LayerCheck $w={30} $h={31}>
                  <Check />
                </LayerCheck>
              </LayerRow>
              <LayerRow $bg="#383838">
                <Expander />
                <Thumb $indent={20}>
                  <ThumbCircle />
                </Thumb>
                <LayerName>(Ellipse)</LayerName>
                <LayerCheck $w={30} $h={31}>
                  <Check />
                </LayerCheck>
              </LayerRow>
              <LayerRow $bg="#5a7ba3">
                <Expander />
                <Thumb>
                  <ThumbBand />
                </Thumb>
                <LayerName $tone="#98b8dc">(Rectangle)</LayerName>
                <LayerCheck $w={30} $h={31}>
                  <Check />
                </LayerCheck>
              </LayerRow>
            </LayerList>

            <BottomBar>
              <LayersToggle>
                <svg width="32" height="26" viewBox="0 0 32 26">
                  <path d="M16 1l16 5-16 6L0 6z" fill="#9c9c9c" />
                  <path d="M0 11l16 6 16-6M0 17l16 7 16-7" fill="none" stroke="#9c9c9c" strokeWidth="3" />
                </svg>
              </LayersToggle>
              <RowIcon $ml={115}>
                <svg width="28" height="24" viewBox="0 0 28 24">
                  <rect width="28" height="24" fill="#aaa" />
                  <circle cx="14" cy="12" r="8" fill="#333" />
                </svg>
              </RowIcon>
              <RowIcon $ml={20}>
                <svg width="24" height="24" viewBox="0 0 24 24">
                  <circle cx="12" cy="12" r="11" fill="#aaa" />
                  <path d="M17 3a11 11 0 0 1 0 18H8z" fill="#414141" />
                  <circle cx="12" cy="12" r="11" fill="none" stroke="#aaa" strokeWidth="1.500" />
                </svg>
              </RowIcon>
              <RowIcon $ml={17}>
                <svg width="28" height="26" viewBox="0 0 28 26">
                  <text x="0" y="20" fontFamily="'Liberation Serif', serif" fontStyle="italic" fontSize="28" fill="#aaa">fx</text>
                </svg>
              </RowIcon>
              <RowIcon $ml={117}>
                <svg width="21" height="24" viewBox="0 0 21 24">
                  <path d="M1 1h11l8 8v14H1zM12 1v8h8" fill="none" stroke="#aaa" strokeWidth="1.500" />
                </svg>
              </RowIcon>
              <RowIcon $ml={26}>
                <svg width="20" height="24" viewBox="0 0 20 24">
                  <rect width="20" height="24" fill="#aaa" />
                  <path d="M0 0h5v4H0zM10 0h5v4h-5zM5 4h5v4H5zM15 4h5v4h-5zM0 8h5v4H0zM10 8h5v4h-5zM5 12h5v4H5zM15 12h5v4h-5zM0 16h5v4H0zM10 16h5v4h-5zM5 20h5v4H5zM15 20h5v4h-5z" fill="#3a3a3a" />
                </svg>
              </RowIcon>
              <RowIcon $ml={25}>
                <svg width="20" height="26" viewBox="0 0 20 26">
                  <path d="M0 6h20M7 4V1h6v3" fill="none" stroke="#aaa" strokeWidth="2" />
                  <path d="M2.500 8h15v17h-15zM7.500 9v15M12.500 9v15" fill="none" stroke="#aaa" strokeWidth="1.500" />
                </svg>
              </RowIcon>
            </BottomBar>

            <TabBar $h={47}>
              <Grip />
              <Tab $ml={16} $w={110} $active>Transform</Tab>
              <Tab $ml={10} $w={68}>History</Tab>
              <TabSep $ml={10} />
              <Tab $ml={7} $w={92}>Navigator</Tab>
            </TabBar>

            <TransformBody>
              <AnchorWrap>
                <svg width="85" height="85" viewBox="0 0 85 85">
                  <rect x="9" y="9" width="66" height="66" fill="#6a6a6a" />
                  <g fill="#aaa">
                    {[0, 1, 2, 3, 4, 5, 6, 7, 8].map((i) => (
                      <rect key={i} x={4 + (i % 3) * 33} y={4 + Math.floor(i / 3) * 32.500} width="11" height="11" />
                    ))}
                  </g>
                  <rect width="19" height="19" fill="#fff" />
                </svg>
              </AnchorWrap>
              <FieldCol>
                <FieldRow>
                  <FieldLabel $w={40}>X:</FieldLabel>
                  <FieldBox $w={119} $h={38}>0 mm</FieldBox>
                  <FieldLabel $w={43}>W:</FieldLabel>
                  <FieldBox $w={119} $h={38}>420.7 mm</FieldBox>
                </FieldRow>
                <FieldRow $mt={6}>
                  <FieldLabel $w={40}>Y:</FieldLabel>
                  <FieldBox $w={119} $h={38}>98.6 mm</FieldBox>
                  <FieldLabel $w={43}>H:</FieldLabel>
                  <FieldBox $w={119} $h={38}>198.4 mm</FieldBox>
                </FieldRow>
                <FieldRow $mt={26}>
                  <FieldLabel $w={40}>R:</FieldLabel>
                  <FieldBox $w={119} $h={37}>
                    0 °
                    <DownTri />
                  </FieldBox>
                  <FieldLabel $w={43}>S:</FieldLabel>
                  <FieldBox $w={119} $h={37}>
                    0 °
                    <DownTri />
                  </FieldBox>
                </FieldRow>
              </FieldCol>
              <ChainSlot>
                <svg width="10" height="30" viewBox="0 0 10 30">
                  <g fill="none" stroke="#8c8c8c" strokeWidth="2">
                    <rect x="1" y="1" width="7" height="12" rx="3.500" />
                    <rect x="1" y="17" width="7" height="12" rx="3.500" />
                    <path d="M4.500 10v10" />
                  </g>
                </svg>
              </ChainSlot>
            </TransformBody>
          </RightPanel>
        </Workspace>

        <StatusBar>
          'Rectangle' selected. <StatusKey>Drag</StatusKey> to move selection. <StatusKey>Click</StatusKey> another object to select it. <StatusKey>Click</StatusKey> on an empty area to deselect selection.
        </StatusBar>
      </Win>
    </Page>
  );
};

export default App;
